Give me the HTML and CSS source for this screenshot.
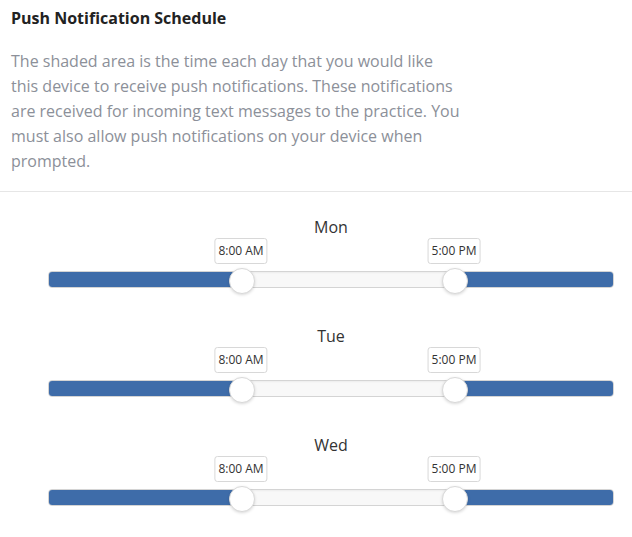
FILE: index.html
```html
<!DOCTYPE html>
<html>
<head>
<meta charset="utf-8">
<link rel="stylesheet" href="styles.css">
</head>
<body>
<div class="panel">
  <div class="header">
    <h2 class="title">Push Notification Schedule</h2>
    <p class="desc">The shaded area is the time each day that you would like this device to receive push notifications. These notifications are received for incoming text messages to the practice. You must also allow push notifications on your device when prompted.</p>
  </div>
  <div class="days">
    <div class="day">
      <div class="day-name">Mon</div>
      <div class="slider">
        <div class="track">
          <div class="fill fill-left" style="width:193px"></div>
          <div class="fill fill-right" style="width:160px"></div>
        </div>
        <div class="tip" style="left:193px">8:00 AM</div>
        <div class="tip" style="left:406px">5:00 PM</div>
        <div class="handle" style="left:193px"></div>
        <div class="handle" style="left:406px"></div>
      </div>
    </div>
    <div class="day">
      <div class="day-name">Tue</div>
      <div class="slider">
        <div class="track">
          <div class="fill fill-left" style="width:193px"></div>
          <div class="fill fill-right" style="width:160px"></div>
        </div>
        <div class="tip" style="left:193px">8:00 AM</div>
        <div class="tip" style="left:406px">5:00 PM</div>
        <div class="handle" style="left:193px"></div>
        <div class="handle" style="left:406px"></div>
      </div>
    </div>
    <div class="day">
      <div class="day-name">Wed</div>
      <div class="slider">
        <div class="track">
          <div class="fill fill-left" style="width:193px"></div>
          <div class="fill fill-right" style="width:160px"></div>
        </div>
        <div class="tip" style="left:193px">8:00 AM</div>
        <div class="tip" style="left:406px">5:00 PM</div>
        <div class="handle" style="left:193px"></div>
        <div class="handle" style="left:406px"></div>
      </div>
    </div>
  </div>
</div>
</body>
</html>
```
FILE: styles.css
```css
html, body {
  margin: 0;
  padding: 0;
  background: #fff;
}
body {
  font-family: "Open Sans", "Noto Sans", sans-serif;
  color: #333;
}
.panel {
  width: 632px;
}
.header {
  padding: 7px 11px 0 11px;
  border-bottom: 1px solid #e6e6e6;
}
.title {
  margin: 0;
  font-size: 16px;
  font-weight: 700;
  line-height: 22px;
  color: #222;
}
.desc {
  margin: 20px 0 17px 0;
  width: 450px;
  font-size: 16px;
  line-height: 25px;
  color: #8c9099;
}
.days {
  padding: 24px 18px 0 48px;
}
.day {
  display: flex;
  flex-direction: column;
  align-items: center;
  height: 109px;
}
.day-name {
  font-size: 16px;
  line-height: 22px;
  color: #333;
}
.slider {
  position: relative;
  width: 566px;
  height: 50px;
}
.track {
  position: absolute;
  left: 0;
  right: 0;
  top: 33px;
  height: 17px;
  box-sizing: border-box;
  background: #f8f8f8;
  border: 1px solid #d4d4d4;
  border-radius: 4px;
  box-shadow: inset 0 1px 2px rgba(0,0,0,0.05);
  overflow: hidden;
}
.fill {
  position: absolute;
  top: -1px;
  bottom: -1px;
  background: #3e6ca9;
}
.fill-left { left: -1px; }
.fill-right { right: -1px; }
.tip {
  position: absolute;
  top: 0;
  transform: translateX(-50%);
  height: 26px;
  box-sizing: border-box;
  padding: 0 3px;
  border: 1px solid #d8d8d8;
  border-radius: 3px;
  background: #fff;
  font-size: 12px;
  line-height: 24px;
  color: #333;
  white-space: nowrap;
}
.handle {
  position: absolute;
  top: 30px;
  width: 26px;
  height: 26px;
  margin-left: -12px;
  box-sizing: border-box;
  border-radius: 50%;
  background: #fff;
  border: 1px solid #d9d9d9;
  box-shadow: 0 1px 3px rgba(0,0,0,0.15);
}
```
